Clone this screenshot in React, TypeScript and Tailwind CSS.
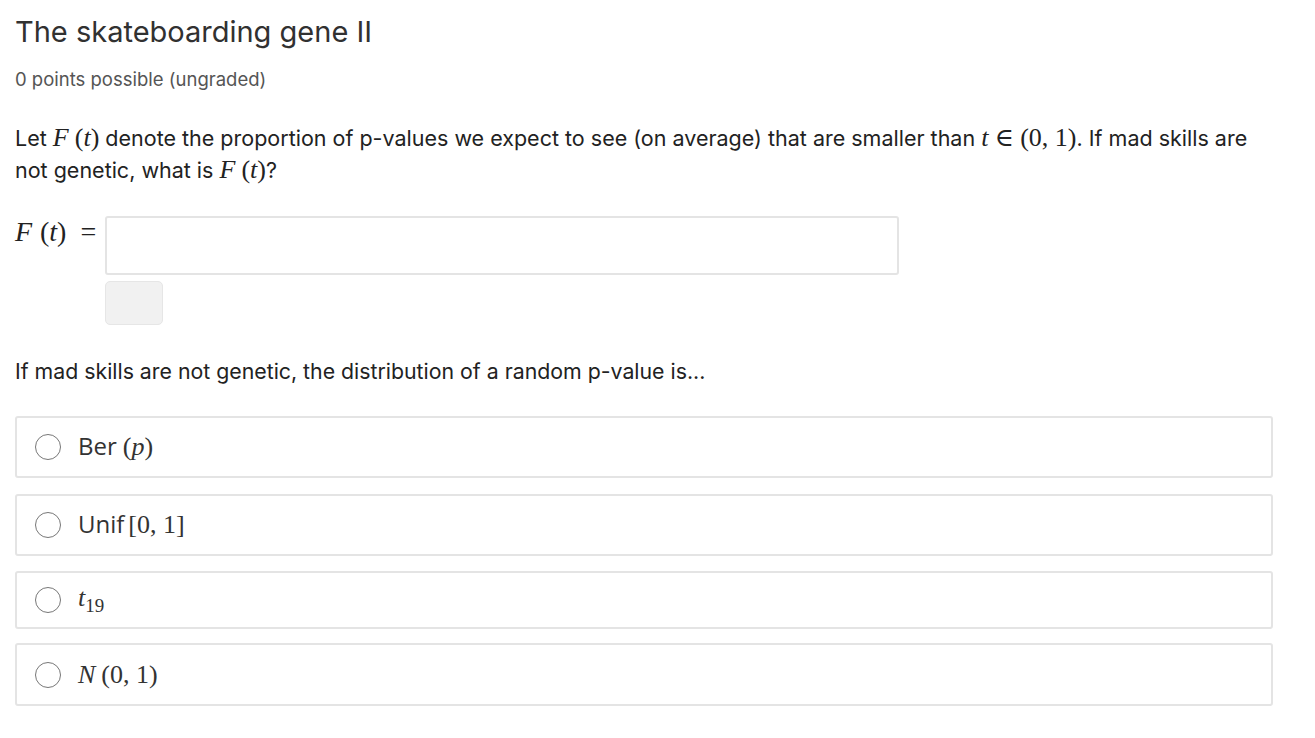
import React from "react";

const serif = "font-['Liberation_Serif','DejaVu_Serif',serif] leading-none";

// plain math piece and italic math variable, kept flat (no nesting)
const R: React.FC<{ children: React.ReactNode; className?: string }> = ({ children, className = "" }) => (
  <span className={`${serif} ${className}`}>{children}</span>
);
const I: React.FC<{ children: React.ReactNode; className?: string }> = ({ children, className = "" }) => (
  <span className={`${serif} italic ${className}`}>{children}</span>
);

const options: { id: string; label: React.ReactNode; h: string }[] = [
  {
    id: "ber",
    h: "h-[62px]",
    label: (
      <>
        <span className="font-['Open_Sans',sans-serif]">Ber</span>
        <R className="ml-[6px] text-[26px]">(</R>
        <I className="text-[26px]">p</I>
        <R className="text-[26px]">)</R>
      </>
    ),
  },
  {
    id: "unif",
    h: "h-[62px]",
    label: (
      <>
        <span className="font-['Open_Sans',sans-serif]">Unif</span>
        <R className="ml-[4px] text-[26px]">[0, 1]</R>
      </>
    ),
  },
  {
    id: "t19",
    h: "h-[58px]",
    label: (
      <>
        <I className="text-[26px]">t</I>
        <R className="text-[19px] align-sub">19</R>
      </>
    ),
  },
  {
    id: "norm",
    h: "h-[63px]",
    label: (
      <>
        <I className="text-[26px]">N</I>
        <R className="text-[26px] ml-[6px]">(0, 1)</R>
      </>
    ),
  },
];

export default function App() {
  return (
    <div className="min-h-screen bg-white font-['Inter',sans-serif] text-[#222] px-[15px] pt-[13px]">
      <h2 className="text-[29px] leading-[38px] text-[#313131] font-normal">The skateboarding gene II</h2>
      <div className="mt-[16px] text-[18.5px] leading-[24px] text-[#555]">0 points possible (ungraded)</div>

      <p className="mt-[31px] w-[1250px] text-[21.5px] leading-[32px] text-[#222]">
        Let <I className="text-[26px]">F</I> <R className="text-[26px]">(</R>
        <I className="text-[26px]">t</I>
        <R className="text-[26px]">)</R> denote the proportion of p-values we expect to see (on average) that are
        smaller than <I className="text-[26px]">t</I> <R className="text-[26px]">∈ (0, 1)</R>. If mad skills are not
        genetic, what is <I className="text-[26px]">F</I> <R className="text-[26px]">(</R>
        <I className="text-[26px]">t</I>
        <R className="text-[26px]">)</R>?
      </p>

      <div className="mt-[30px] flex items-start">
        <div className="w-[90px] text-[28px] leading-[30px] whitespace-nowrap">
          <I>F</I> <R>(</R>
          <I>t</I>
          <R>)&nbsp;&nbsp;=</R>
        </div>
        <div className="flex flex-col gap-[6px]">
          <input
            type="text"
            className="w-[794px] h-[59px] rounded-[3px] border-2 border-[#e4e4e4] bg-white outline-none"
          />
          <div className="w-[58px] h-[44px] rounded-[5px] border border-[#e6e6e6] bg-[#f1f1f1]" />
        </div>
      </div>

      <p className="mt-[32px] text-[21.3px] leading-[28px] text-[#222]">
        If mad skills are not genetic, the distribution of a random p-value is...
      </p>

      <div className="mt-[31px] flex flex-col gap-[16px] w-[1258px] pb-[30px]">
        {options.map((o, i) => (
          <label
            key={o.id}
            className={`flex items-center ${o.h} ${i === 2 ? "-mt-[1px]" : ""} ${i === 3 ? "-mt-[2px]" : ""} rounded-[3px] border-2 border-[#e4e4e4] pl-[18px] text-[24px] text-[#333] cursor-pointer`}
          >
            <span className="w-[26px] h-[26px] rounded-full border border-[#777] shrink-0 bg-white" />
            <span className="ml-[17px] leading-none">{o.label}</span>
          </label>
        ))}
      </div>
    </div>
  );
}
